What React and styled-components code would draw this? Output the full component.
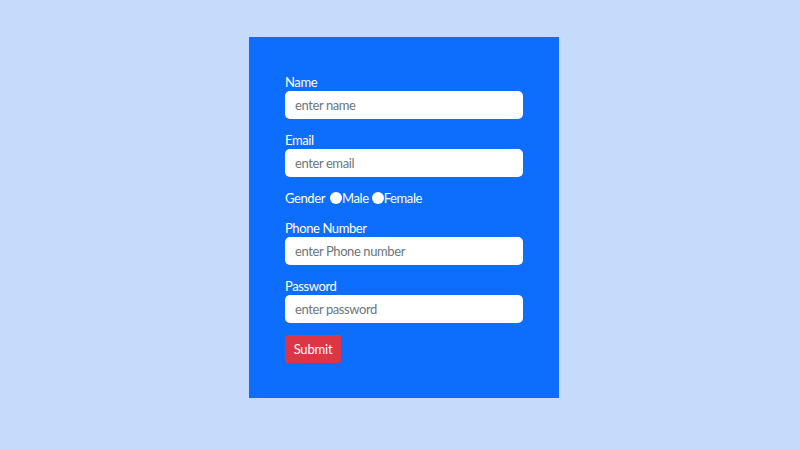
import React from 'react'
import styled, { createGlobalStyle } from 'styled-components'

const GlobalStyle = createGlobalStyle`
    html, body {
        margin: 0;
        padding: 0;
        background-color: #c6dafc;
        font-family: Lato, "Noto Sans", sans-serif;
    }
`

const Page = styled.div`
    width: 800px;
    height: 450px;
    display: flex;
    justify-content: center;
    padding: 37px 0 0 8px;
    box-sizing: border-box;
`

const Card = styled.form`
    width: 310px;
    height: 361px;
    box-sizing: border-box;
    background-color: #0d6efd;
    padding: 37px 36px 0 36px;
    display: flex;
    flex-direction: column;
    letter-spacing: -0.4px;
`

const Field = styled.div`
    display: flex;
    flex-direction: column;
    margin-bottom: 13px;
`

const Label = styled.label`
    color: #ffffff;
    font-size: 13px;
    line-height: 16px;
    margin-bottom: 1px;
`

const Input = styled.input`
    height: 28px;
    box-sizing: border-box;
    border: none;
    border-radius: 5px;
    background: #ffffff;
    padding: 0 10px;
    font-family: inherit;
    font-size: 13px;
    letter-spacing: -0.4px;
    color: #212529;
    outline: none;
    &::placeholder {
        color: #6c757d;
    }
`

const RadioRow = styled.div`
    display: flex;
    align-items: center;
    color: #ffffff;
    font-size: 13px;
    line-height: 16px;
    margin-bottom: 14px;
    .gender {
        margin-right: 5px;
    }
    label {
        display: flex;
        align-items: center;
        margin-right: 3px;
    }
`

const Dot = styled.input`
    appearance: none;
    width: 12px;
    height: 12px;
    margin: 0;
    border-radius: 50%;
    background: #ffffff;
    border: none;
`

const SubmitButton = styled.button`
    align-self: flex-start;
    width: 56px;
    height: 28px;
    border: none;
    border-radius: 3px;
    background-color: #dc3545;
    color: #ffffff;
    font-family: inherit;
    font-size: 13px;
    letter-spacing: -0.2px;
    padding: 0;
    margin-top: -1px;
`

const fields = [
    { id: 'name', label: 'Name', type: 'text', placeholder: 'enter name' },
    { id: 'email', label: 'Email', type: 'email', placeholder: 'enter email' },
]

const fields2 = [
    { id: 'phone', label: 'Phone Number', type: 'text', placeholder: 'enter Phone number' },
    { id: 'password', label: 'Password', type: 'password', placeholder: 'enter password' },
]

const App = () => {
    const renderField = (f) => (
        <Field key={f.id}>
            <Label htmlFor={f.id}>{f.label}</Label>
            <Input id={f.id} type={f.type} placeholder={f.placeholder} />
        </Field>
    )

    return (
        <>
            <GlobalStyle />
            <Page>
                <Card onSubmit={(e) => e.preventDefault()}>
                    {fields.map(renderField)}
                    <RadioRow>
                        <span className="gender">Gender</span>
                        <label><Dot type="radio" name="gender" />Male</label>
                        <label><Dot type="radio" name="gender" />Female</label>
                    </RadioRow>
                    {fields2.map(renderField)}
                    <SubmitButton type="submit">Submit</SubmitButton>
                </Card>
            </Page>
        </>
    )
}

export default App
